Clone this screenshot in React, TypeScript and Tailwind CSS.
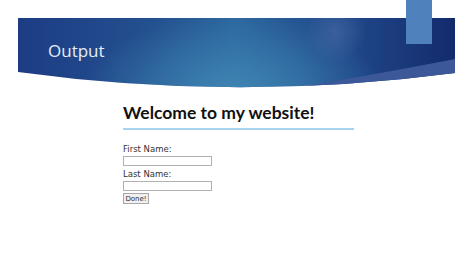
import React from 'react';

function BannerShape() {
  return (
    <svg className="absolute inset-0" width="437" height="70" viewBox="0 0 437 70">
      <defs>
        <linearGradient id="base" x1="0" y1="0" x2="1" y2="0">
          <stop offset="0" stopColor="#1d3c84" />
          <stop offset="0.3" stopColor="#23508f" />
          <stop offset="0.5" stopColor="#2c679e" />
          <stop offset="0.75" stopColor="#20488a" />
          <stop offset="1" stopColor="#132b6c" />
        </linearGradient>
        <radialGradient id="glow" cx="215" cy="72" r="150" gradientUnits="userSpaceOnUse" gradientTransform="translate(215 72) scale(1 0.5) translate(-215 -72)">
          <stop offset="0" stopColor="#3f86b4" stopOpacity="0.95" />
          <stop offset="1" stopColor="#3f86b4" stopOpacity="0" />
        </radialGradient>
        <radialGradient id="spot" cx="318" cy="14" r="30" gradientUnits="userSpaceOnUse">
          <stop offset="0" stopColor="#5d78b0" stopOpacity="0.45" />
          <stop offset="1" stopColor="#5d78b0" stopOpacity="0" />
        </radialGradient>
        <clipPath id="shape">
          <path d="M0 0 H437 V55 Q218 84 0 54 Z" />
        </clipPath>
      </defs>
      <g clipPath="url(#shape)">
        <rect width="437" height="70" fill="url(#base)" />
        <rect width="437" height="70" fill="url(#glow)" />
        <rect width="437" height="70" fill="url(#spot)" />
        <path d="M437 41 Q350 58 240 76 L437 76 Z" fill="#3c5898" />
      </g>
    </svg>
  );
}

export default function App() {
  return (
    <div className="relative h-[266px] w-[474px] overflow-hidden bg-white">
      <div className="relative ml-[18px] mt-[18px] h-[70px] w-[437px]">
        <BannerShape />
        <h1 className="relative pl-[30px] pt-[22px] font-['Open_Sans',sans-serif] text-[17px] font-normal leading-[22px] text-[#e4eef7]">
          Output
        </h1>
      </div>
      <div className="absolute left-[406px] top-0 h-[44px] w-[26px] bg-[#4f81bd]" />

      <div className="ml-[123px] mt-[14px] w-[231px] font-['DejaVu_Sans',sans-serif] text-[#222]">
        <h2 className="border-b-2 border-[#a9d2ee] pb-[4px] font-['Lato',sans-serif] text-[17.5px] font-bold leading-[22px] text-[#111]">
          Welcome to my website!
        </h2>
        <form className="mt-[14px] flex flex-col items-start text-[8.5px] leading-[11px] text-[#333]">
          <label>First Name:</label>
          <input className="mt-[1px] h-[10px] w-[89px] border border-[#b0b0b0] bg-white" />
          <label className="mt-[3px]">Last Name:</label>
          <input className="mt-[1px] h-[10px] w-[89px] border border-[#b0b0b0] bg-white" />
          <button type="button" className="mt-[2px] flex h-[11px] w-[26px] items-center justify-center border border-[#a8a8a8] bg-[#f0f0f0] text-[7px] leading-[8px] text-[#333]">
            Done!
          </button>
        </form>
      </div>
    </div>
  );
}
